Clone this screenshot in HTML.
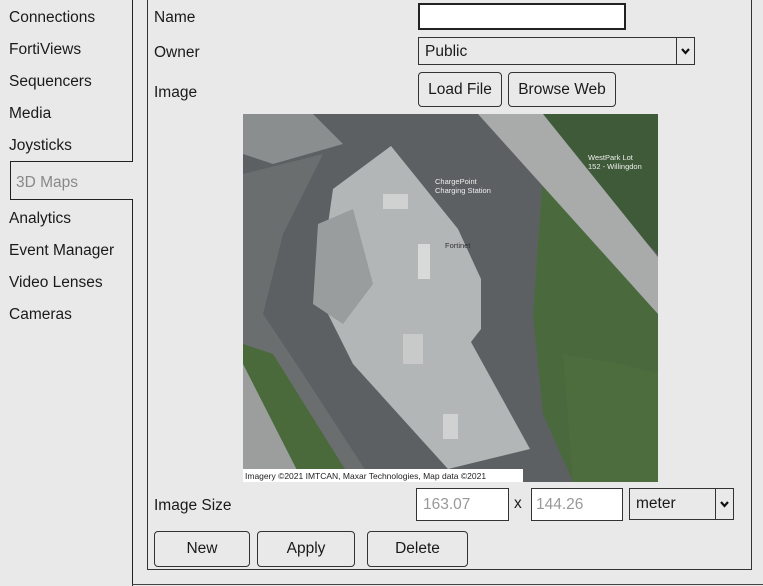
<!DOCTYPE html>
<html><head><style>
body{margin:0;width:763px;height:586px;background:#e9e9e9;font-family:"Liberation Sans",sans-serif;font-size:15.5px;color:#1a1a1a;position:relative;overflow:hidden}
.a{position:absolute}
.it{position:absolute;left:9px}
.btn{position:absolute;border:1px solid #333;border-radius:4px;background:#e9e9e9;text-align:center;box-sizing:border-box}
.inp{position:absolute;border:2px solid #222;background:#fff;box-sizing:border-box}
.sel{position:absolute;border:1px solid #333;background:#e9e9e9;box-sizing:border-box}
.dd{position:absolute;right:0;top:0;bottom:0;width:17px;border-left:1px solid #333}
.dd svg{position:absolute;left:4px;top:50%;margin-top:-4px}
</style></head><body>
<div class="a" style="left:132px;top:0;width:1px;height:161px;background:#222"></div>
<div class="a" style="left:10px;top:161px;width:123px;height:39px;border:1px solid #222;border-right:none;box-sizing:border-box"></div>
<div class="a" style="left:132px;top:200px;width:1px;height:386px;background:#222"></div>
<div class="a" style="left:132px;top:584px;width:631px;height:1px;background:#444"></div>
<div class="a" style="left:147px;top:0;width:605px;height:570px;border:1px solid #333;border-top:none;box-sizing:border-box"></div>
<div class="it" style="top:9px">Connections</div>
<div class="it" style="top:41px">FortiViews</div>
<div class="it" style="top:73px">Sequencers</div>
<div class="it" style="top:105px">Media</div>
<div class="it" style="top:137px">Joysticks</div>
<div class="it" style="top:174px;left:16px;color:#888">3D Maps</div>
<div class="it" style="top:210px">Analytics</div>
<div class="it" style="top:242px">Event Manager</div>
<div class="it" style="top:274px">Video Lenses</div>
<div class="it" style="top:306px">Cameras</div>
<div class="a" style="left:154px;top:9px">Name</div>
<div class="a" style="left:154px;top:44px">Owner</div>
<div class="a" style="left:154px;top:84px">Image</div>
<div class="inp" style="left:418px;top:3px;width:208px;height:27px"></div>
<div class="sel" style="left:418px;top:37px;width:277px;height:28px"><span style="position:absolute;left:6px;top:5px">Public</span><div class="dd"><svg width="9" height="8" viewBox="0 0 9 8"><path d="M1 2 L4.5 6 L8 2" stroke="#111" stroke-width="2.2" fill="none"/></svg></div></div>
<div class="btn" style="left:418px;top:72px;width:84px;height:35px;line-height:33px">Load File</div>
<div class="btn" style="left:508px;top:72px;width:108px;height:35px;line-height:33px">Browse Web</div>
<svg class="a" style="left:243px;top:114px" width="415" height="368" viewBox="0 0 415 368">
<rect width="415" height="368" fill="#5c6062"/>
<polygon points="270,0 415,0 415,140" fill="#3f5a38"/>
<polygon points="300,60 415,200 415,368 330,368 300,300 290,200" fill="#4a6a3e"/>
<polygon points="320,240 380,250 415,260 415,368 330,368" fill="#4d6d3e"/>
<polygon points="235,0 300,0 415,143 415,200" fill="#a9abab"/>
<polygon points="0,0 70,0 100,30 30,50 0,40" fill="#8a8e8e"/>
<polygon points="0,60 80,40 40,120 20,200 60,260 130,368 60,368 0,240" fill="#6a6e6f"/>
<polygon points="0,230 30,240 110,368 60,368 0,260" fill="#4a6a3c"/>
<polygon points="0,250 60,368 0,368" fill="#9c9e9e"/>
<polygon points="90,75 148,32 215,115 238,165 238,215 228,228 287,335 205,355 110,250 75,180" fill="#b3b6b6"/>
<polygon points="75,110 110,95 130,170 100,210 70,190" fill="#9a9d9d"/>
<rect x="140" y="80" width="25" height="15" fill="#d0d2d2"/>
<rect x="175" y="130" width="12" height="35" fill="#d8dada"/>
<rect x="160" y="220" width="20" height="30" fill="#c8caca"/>
<rect x="200" y="300" width="15" height="25" fill="#d0d2d2"/>
<rect x="0" y="355" width="280" height="13" fill="#fff"/>
<text x="2" y="365" font-family="Liberation Sans" font-size="8.5" fill="#222">Imagery ©2021 IMTCAN, Maxar Technologies, Map data ©2021</text>
<text x="192" y="70" font-family="Liberation Sans" font-size="7.5" fill="#eee">ChargePoint</text>
<text x="192" y="79" font-family="Liberation Sans" font-size="7.5" fill="#eee">Charging Station</text>
<text x="202" y="134" font-family="Liberation Sans" font-size="7.5" fill="#333">Fortinet</text>
<text x="345" y="46" font-family="Liberation Sans" font-size="7.5" fill="#eee">WestPark Lot</text>
<text x="345" y="55" font-family="Liberation Sans" font-size="7.5" fill="#eee">152 - Willingdon</text>
</svg>
<div class="a" style="left:154px;top:497px">Image Size</div>
<div class="inp" style="left:416px;top:488px;width:93px;height:33px;border-width:1px;border-color:#333"><span style="position:absolute;left:6px;top:7px;color:#999">163.07</span></div>
<div class="a" style="left:514px;top:495px">x</div>
<div class="inp" style="left:531px;top:488px;width:92px;height:33px;border-width:1px;border-color:#333"><span style="position:absolute;left:4px;top:7px;color:#999">144.26</span></div>
<div class="sel" style="left:629px;top:488px;width:105px;height:32px"><span style="position:absolute;left:6px;top:6px">meter</span><div class="dd"><svg width="9" height="8" viewBox="0 0 9 8"><path d="M1 2 L4.5 6 L8 2" stroke="#111" stroke-width="2.2" fill="none"/></svg></div></div>
<div class="btn" style="left:154px;top:531px;width:96px;height:36px;line-height:34px">New</div>
<div class="btn" style="left:257px;top:531px;width:98px;height:36px;line-height:34px">Apply</div>
<div class="btn" style="left:367px;top:531px;width:101px;height:36px;line-height:34px">Delete</div>
</body></html>
